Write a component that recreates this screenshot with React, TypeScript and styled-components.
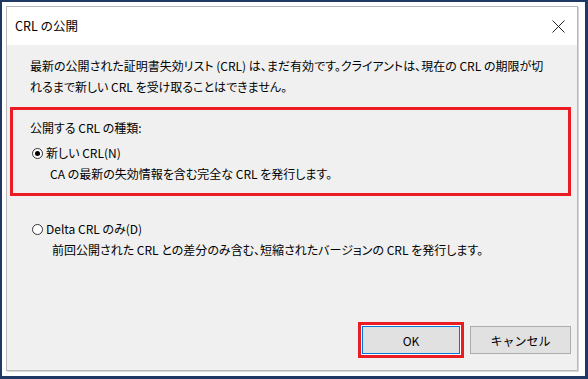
import styled, { createGlobalStyle } from "styled-components";

const GlobalStyle = createGlobalStyle`
  html, body {
    margin: 0;
    padding: 0;
    background: #ffffff;
  }
  body {
    font-family: "Noto Sans CJK JP", "Noto Sans", sans-serif;
    color: #000000;
  }
`;

const Frame = styled.div`
  width: 588px;
  height: 379px;
  box-sizing: border-box;
  border: 2px solid #203864;
  border-right-width: 3px;
  border-bottom-width: 3px;
  padding: 4px 7px 5px 4px;
  background: #ffffff;
  display: flex;
`;

const Dialog = styled.div`
  flex: 1;
  min-width: 0;
  overflow: hidden;
  display: flex;
  flex-direction: column;
  border: 1px solid #b9b9b9;
  box-shadow: 1px 1px 0 #d6d6d6;
`;

const TitleBar = styled.div`
  height: 38px;
  background: #ffffff;
  display: flex;
  align-items: center;
  justify-content: space-between;
  padding: 0 12px 0 8px;
  font-size: 12.5px;
`;

const Title = styled.span`
  margin-top: -1px;
`;

const CloseButton = styled.div`
  width: 14px;
  height: 14px;
  display: flex;
  align-items: center;
  justify-content: center;
`;

const Body = styled.div`
  flex: 1;
  background: #f0f0f0;
  display: flex;
  flex-direction: column;
  padding: 10px 6px 12px 3px;
  font-size: 12px;
  font-feature-settings: "palt";
`;

const Intro = styled.p`
  margin: 0 0 10px 20px;
  line-height: 21px;
  white-space: nowrap;
`;

const Highlight = styled.div`
  border: 3px solid #ec1c24;
  padding: 8px 0 9px 17px;
  margin-bottom: 23px;
`;

const GroupLabel = styled.div`
  line-height: 20px;
  margin-bottom: 5px;
`;

const Option = styled.div`
  padding-left: 2px;
`;

const RadioRow = styled.label`
  display: flex;
  align-items: center;
  line-height: 20px;
  gap: 3px;
`;

const Radio = styled.span<{ $checked?: boolean }>`
  width: 11px;
  height: 11px;
  box-sizing: border-box;
  border: 1px solid #333333;
  border-radius: 50%;
  background: #ffffff;
  display: inline-flex;
  align-items: center;
  justify-content: center;
  &::after {
    content: "";
    width: 5px;
    height: 5px;
    border-radius: 50%;
    background: ${(p) => (p.$checked ? "#000000" : "transparent")};
  }
`;

const Description = styled.div<{ $indent?: number }>`
  padding-left: ${(p) => p.$indent ?? 18}px;
  line-height: 21px;
`;

const Loose = styled.div`
  padding-left: 20px;
`;

const Spacer = styled.div`
  flex: 1;
`;

const ButtonRow = styled.div`
  display: flex;
  justify-content: flex-end;
  align-items: center;
  gap: 6px;
`;

const Marked = styled.div`
  border: 3px solid #ec1c24;
  padding: 1px;
  background: #ffffff;
  display: flex;
`;

const Button = styled.button<{ $default?: boolean }>`
  width: ${(p) => (p.$default ? 98 : 101)}px;
  height: 28px;
  box-sizing: border-box;
  background: #e1e1e1;
  border: 1px solid ${(p) => (p.$default ? "#0078d7" : "#adadad")};
  font-family: "Noto Sans CJK JP", "Noto Sans", sans-serif;
  font-size: 12px;
  color: #000000;
  padding: 0;
`;

export default function App() {
  return (
    <>
      <GlobalStyle />
      <Frame>
        <Dialog>
          <TitleBar>
            <Title>CRL の公開</Title>
            <CloseButton>
              <svg width="13" height="13" viewBox="0 0 13 13">
                <path d="M0.5 0.5 L12.5 12.5 M12.5 0.5 L0.5 12.5" stroke="#222" strokeWidth="1" fill="none" />
              </svg>
            </CloseButton>
          </TitleBar>
          <Body>
            <Intro>
              最新の公開された証明書失効リスト (CRL) は、まだ有効です。クライアントは、現在の CRL の期限が切
              <br />
              れるまで新しい CRL を受け取ることはできません。
            </Intro>
            <Highlight>
              <GroupLabel>公開する CRL の種類:</GroupLabel>
              <Option>
                <RadioRow>
                  <Radio $checked />
                  新しい CRL(N)
                </RadioRow>
                <Description>CA の最新の失効情報を含む完全な CRL を発行します。</Description>
              </Option>
            </Highlight>
            <Loose>
              <Option>
                <RadioRow>
                  <Radio />
                  Delta CRL のみ(D)
                </RadioRow>
                <Description $indent={20}>
                  前回公開された CRL との差分のみ含む、短縮されたバージョンの CRL を発行します。
                </Description>
              </Option>
            </Loose>
            <Spacer />
            <ButtonRow>
              <Marked>
                <Button $default>OK</Button>
              </Marked>
              <Button>キャンセル</Button>
            </ButtonRow>
          </Body>
        </Dialog>
      </Frame>
    </>
  );
}
